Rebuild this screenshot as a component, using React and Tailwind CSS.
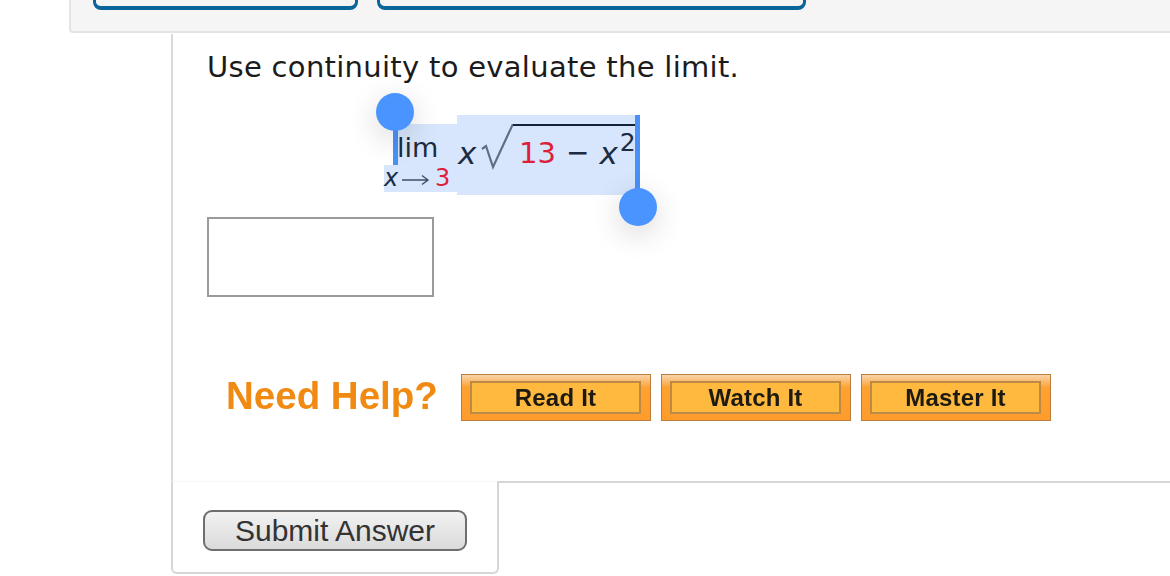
export default function App() {
  const helpButtons = ["Read It", "Watch It", "Master It"];
  return (
    <div className="relative w-[1170px] h-[576px] overflow-hidden bg-white font-['DejaVu_Sans',sans-serif]">
      {/* top strip */}
      <div className="ml-[69px] h-[33px] flex gap-[19px] pl-[22px] bg-[#f5f5f5] border-l-2 border-b-2 border-[#e4e4e4] rounded-bl-[4px]">
        <div className="w-[265px] h-[10px] border-x-[3px] border-b-[4px] border-[#0b659b] rounded-b-[8px] bg-[#f5f5f5]" />
        <div className="w-[429px] h-[10px] border-x-[3px] border-b-[4px] border-[#0b659b] rounded-b-[8px] bg-[#f5f5f5]" />
      </div>

      {/* question */}
      <div className="ml-[171px] mt-[1px] h-[447px] border-l-2 border-[#d9d9d9] pl-[34px] flex flex-col">
        <div className="mt-[14px] h-[38px] leading-[38px] text-[29px] text-[#1b1b1b] tracking-[0.3px] whitespace-nowrap">
          Use continuity to evaluate the limit.
        </div>

        {/* formula */}
        <div className="mt-[29px] ml-[177px] flex items-start text-[#1c2b3f]">
          <div className="mt-[9px] flex flex-col items-end">
            <div className="w-[62px] h-[41px] bg-[#d7e6fc] pl-[2px] text-[27px] leading-[47px]">lim</div>
            <div className="w-[73px] h-[27px] bg-[#d7e6fc] flex items-center text-[24px] leading-[27px] whitespace-nowrap">
              <span className="italic w-[18px]">x</span>
              <svg width="27" height="14" viewBox="0 0 27 14" className="shrink-0 mt-[2px]">
                <path d="M0 7 H25 M20 2.5 L26 7 L20 11.5" fill="none" stroke="#3f4f66" strokeWidth="1.4" />
              </svg>
              <span className="ml-[6px] text-[#dc1f3a]">3</span>
            </div>
          </div>
          <div className="w-[180px] h-[80px] bg-[#d7e6fc] flex items-start pl-[1px] pt-[9px] whitespace-nowrap">
            <span className="mt-[5px] w-[23px] italic text-[31px] leading-[48px]">x</span>
            <svg width="32" height="48" viewBox="0 0 32 48" className="shrink-0">
              <path d="M1 25 L5 22 L12 43 L32 0" fill="none" stroke="#5f6f84" strokeWidth="2.2" />
            </svg>
            <div className="h-[50px] w-[122px] border-t-2 border-[#13233a] flex items-start pl-[6px] pt-[3px]">
              <span className="text-[#dc1f3a] text-[29px] leading-[48px]">13</span>
              <span className="ml-[10px] text-[28px] leading-[48px]">−</span>
              <span className="ml-[10px] italic text-[31px] leading-[48px]">x</span>
              <span className="ml-[2px] text-[25px] leading-[28px]">2</span>
            </div>
          </div>
        </div>

        {/* answer box */}
        <div className="mt-[22px] w-[227px] h-[80px] border-2 border-[#9a9a9a] bg-white" />

        {/* help */}
        <div className="mt-[77px] ml-[19px] flex items-start">
          <div className="w-[235px] -mt-[2px] font-['Liberation_Sans',sans-serif] font-bold text-[38.5px] leading-[47px] text-[#f08a12] blur-[0.4px] whitespace-nowrap">
            Need Help?
          </div>
          <div className="flex gap-[10px]">
            {helpButtons.map((label) => (
              <div key={label} className="w-[190px] h-[47px] border-[1.5px] border-[#bb7d3d] bg-[linear-gradient(#f6d5ad_0%,#ffa130_28%,#ff9c2b_100%)] pt-[6px] pl-[8px] pr-[9px]">
                <div className="h-[33px] border-2 border-[#bd8a45] bg-[#ffb93f] flex items-center justify-center font-['Liberation_Sans',sans-serif] font-bold text-[24px] tracking-[0.2px] text-[#1d1a12] blur-[0.4px]">
                  {label}
                </div>
              </div>
            ))}
          </div>
        </div>
      </div>

      {/* bottom edge */}
      <div className="flex">
        <div className="ml-[171px] w-[328px] h-[93px] border-x-2 border-b-2 border-t border-t-[#f6f6f6] border-x-[#d6d6d6] border-b-[#d6d6d6] rounded-b-[6px] pl-[30px] pt-[28px]">
          <div className="w-[264px] h-[41px] rounded-[9px] border-2 border-[#6e6e6e] bg-[linear-gradient(#f2f2f2,#dadada)] flex items-center justify-center font-['Liberation_Sans',sans-serif] text-[30px] text-[#333333]">
            Submit Answer
          </div>
        </div>
        <div className="flex-1 h-[2px] bg-[#d6d6d6] -ml-[2px]" />
      </div>

      {/* selection handles */}
      <div className="absolute left-[393px] top-[112px] w-[5px] h-[53px] bg-[#4a90f7]" />
      <div className="absolute left-[376px] top-[93px] w-[38px] h-[38px] rounded-full bg-[#4a94ff] shadow-[0_8px_30px_rgba(0,0,0,0.16)]" />
      <div className="absolute left-[635px] top-[115px] w-[5px] h-[92px] bg-[#4a90f7]" />
      <div className="absolute left-[619px] top-[188px] w-[38px] h-[38px] rounded-full bg-[#4a94ff] shadow-[0_8px_30px_rgba(0,0,0,0.16)]" />
    </div>
  );
}
